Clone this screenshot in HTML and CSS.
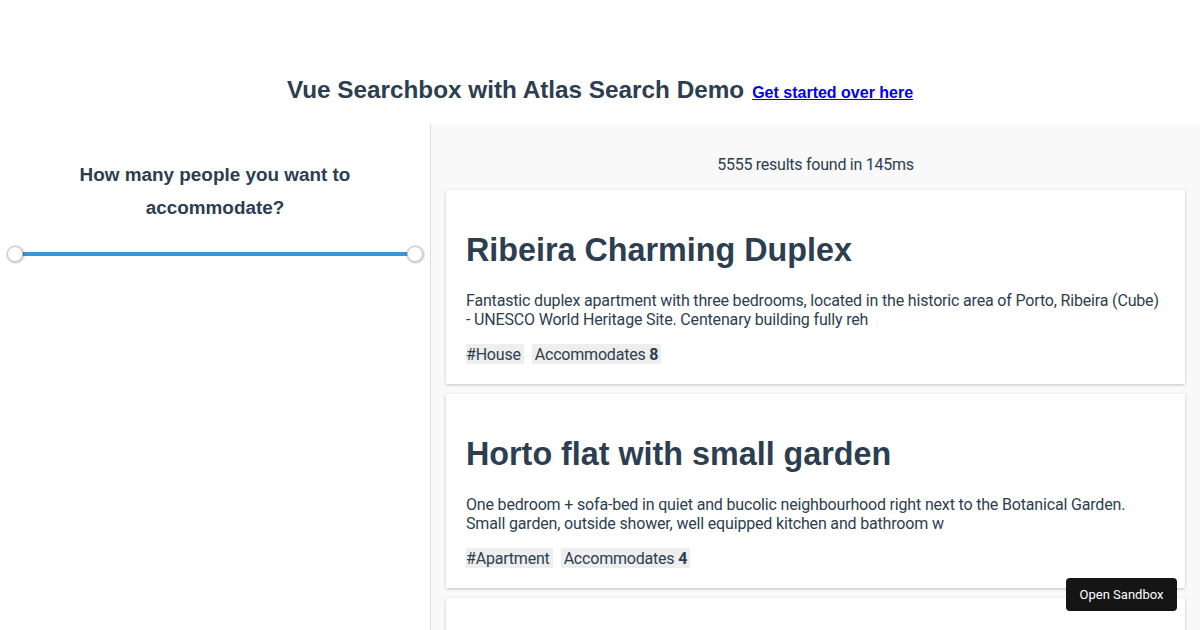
FILE: index.html
```html
<!DOCTYPE html>
<html>
<head>
<meta charset="utf-8">
<link rel="stylesheet" href="styles.css">
</head>
<body>
<div class="app">
  <header class="header">
    <span class="title">Vue Searchbox with Atlas Search Demo</span><a class="link" href="#">Get started over here</a>
  </header>
  <div class="main">
    <aside class="sidebar">
      <h2 class="filter-title">How many people you want to accommodate?</h2>
      <div class="slider">
        <div class="track"></div>
        <span class="thumb thumb-left"></span>
        <span class="thumb thumb-right"></span>
      </div>
    </aside>
    <section class="results">
      <p class="stats">5555 results found in 145ms</p>
      <div class="card">
        <h1 class="card-title">Ribeira Charming Duplex</h1>
        <p class="card-desc">Fantastic duplex apartment with three bedrooms, located in the historic area of Porto, Ribeira (Cube) - UNESCO World Heritage Site. Centenary building fully reh</p>
        <div class="tags"><span class="tag">#House</span><span class="tag">Accommodates <b>8</b></span></div>
      </div>
      <div class="card">
        <h1 class="card-title">Horto flat with small garden</h1>
        <p class="card-desc">One bedroom + sofa-bed in quiet and bucolic neighbourhood right next to the Botanical Garden. Small garden, outside shower, well equipped kitchen and bathroom w</p>
        <div class="tags"><span class="tag">#Apartment</span><span class="tag">Accommodates <b>4</b></span></div>
      </div>
      <div class="card card-partial"></div>
    </section>
  </div>
</div>
<button class="sandbox">Open Sandbox</button>
</body>
</html>
```
FILE: styles.css
```css
html, body {
  margin: 0;
  padding: 0;
  height: 100%;
  overflow: hidden;
}
body {
  font-family: "Liberation Sans", Arial, sans-serif;
  color: #2c3e50;
  background: #fff;
}
.app {
  display: flex;
  flex-direction: column;
  height: 100%;
}
.header {
  height: 124px;
  box-sizing: border-box;
  padding-top: 76px;
  display: flex;
  justify-content: center;
  align-items: baseline;
}
.title {
  font-size: 24.3px;
  font-weight: bold;
  color: #2c3e50;
}
.link {
  margin-left: 8px;
  font-size: 16px;
  font-weight: bold;
  color: #0000ee;
  text-decoration: underline;
}
.main {
  flex: 1;
  display: flex;
  min-height: 0;
}
.sidebar {
  width: 431px;
  flex: none;
  border-right: 1px solid #dcdcdc;
  box-sizing: border-box;
  padding-top: 34px;
}
.filter-title {
  margin: 0 50px;
  font-size: 18.9px;
  line-height: 33px;
  font-weight: bold;
  text-align: center;
  color: #2c3e50;
}
.slider {
  position: relative;
  margin: 28px 15px 0;
  height: 4px;
}
.track {
  height: 4px;
  background: #3498db;
  border-radius: 2px;
}
.thumb {
  position: absolute;
  top: -6px;
  width: 14px;
  height: 14px;
  border-radius: 50%;
  background: #fff;
  border: 1px solid #c8c8c8;
  box-shadow: 0.5px 0.5px 2px 1px rgba(0, 0, 0, 0.2);
}
.thumb-left { left: -8px; }
.thumb-right { right: -8px; }
.results {
  flex: 1;
  background: #f9f9f9;
  padding: 15px 15px 0;
  font-family: Roboto, "Liberation Sans", sans-serif;
  overflow: hidden;
}
.stats {
  margin: 16px 0;
  text-align: center;
  font-size: 16px;
  line-height: 19px;
  letter-spacing: -0.25px;
  color: #2c3e50;
}
.card {
  background: #fff;
  padding: 20px 20px 20px;
  margin-bottom: 10px;
  box-shadow: 0 1px 3px rgba(0, 0, 0, 0.22);
}
.card-partial {
  height: 120px;
}
.card-title {
  font-family: "Liberation Sans", Arial, sans-serif;
  font-size: 32.3px;
  line-height: 37px;
  font-weight: bold;
  margin: 22px 0 22px;
  color: #2c3e50;
}
.card-desc {
  margin: 0 0 15px;
  font-size: 16px;
  line-height: 19px;
  letter-spacing: -0.17px;
  color: #2c3e50;
}
.tags {
  display: flex;
  gap: 8px;
  font-size: 16px;
  line-height: 19px;
  letter-spacing: -0.2px;
}
.tag {
  background: #eeeeee;
  padding: 1px 3px 0 0;
}
.tag + .tag {
  padding: 1px 3px 0 3px;
}
.tag b {
  font-weight: bold;
}
.sandbox {
  position: fixed;
  right: 23px;
  bottom: 19px;
  width: 111px;
  height: 33px;
  background: #151515;
  color: #fff;
  border: none;
  border-radius: 4px;
  font-family: Roboto, "Liberation Sans", sans-serif;
  font-size: 13px;
  padding: 0;
}
```
